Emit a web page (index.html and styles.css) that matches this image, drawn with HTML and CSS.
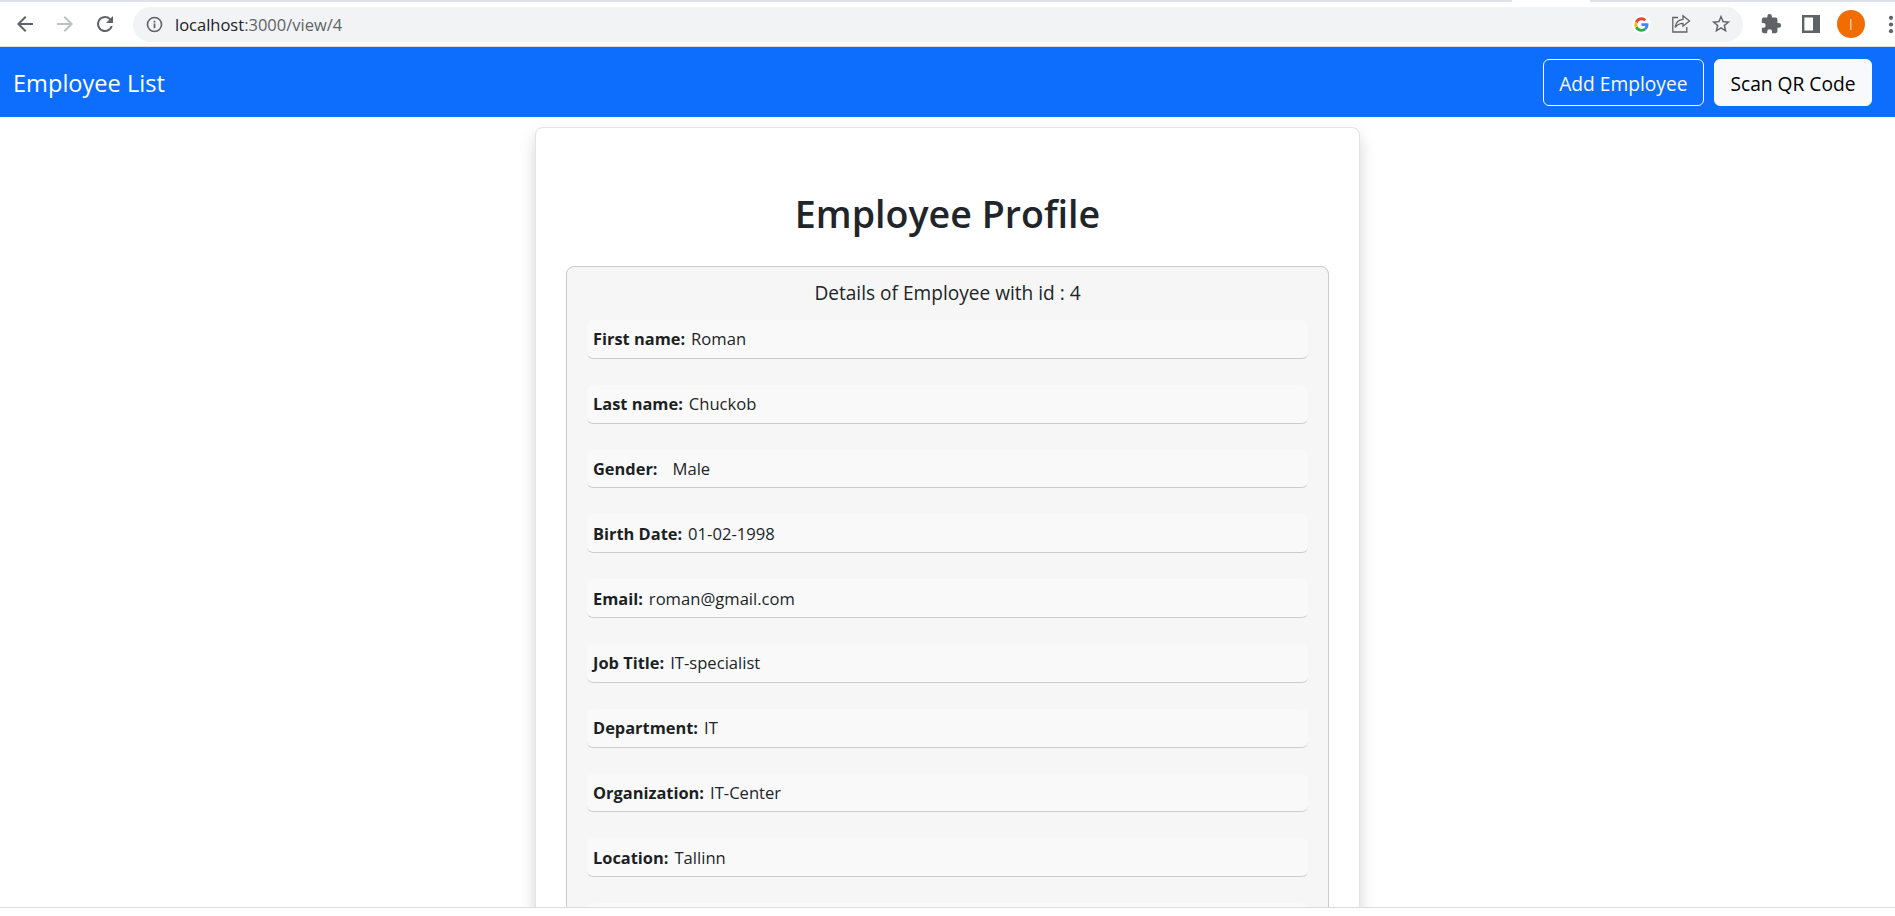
FILE: index.html
```html
<!DOCTYPE html>
<html lang="en">
<head>
<meta charset="utf-8">
<title>Employee Profile</title>
<link rel="stylesheet" href="styles.css">
</head>
<body>
<div class="window">
  <div class="tabstrip"><div class="tab-gap"></div></div>
  <div class="toolbar">
    <svg class="tb-icon back" viewBox="0 0 24 24"><path d="M20 11H7.830l5.590-5.590L12 4l-8 8 8 8 1.410-1.410L7.830 13H20z"/></svg>
    <svg class="tb-icon fwd" viewBox="0 0 24 24"><path d="M4 11h12.170l-5.590-5.590L12 4l8 8-8 8-1.410-1.410L16.170 13H4z"/></svg>
    <svg class="tb-icon reload" viewBox="0 0 24 24"><path d="M17.650 6.350A7.960 7.960 0 0 0 12 4a8 8 0 1 0 7.730 10h-2.080A6 6 0 1 1 12 6c1.660 0 3.140.690 4.220 1.780L13 11h7V4z"/></svg>
    <div class="omnibox">
      <svg class="info" viewBox="0 0 16 16"><circle cx="8" cy="8" r="6.600" fill="none" stroke="#5f6368" stroke-width="1.500"/><rect x="7.200" y="7" width="1.600" height="4.400" fill="#5f6368"/><rect x="7.200" y="4.500" width="1.600" height="1.600" fill="#5f6368"/></svg>
      <span class="url"><span class="host">localhost</span>:3000/view/4</span>
      <span class="omni-spacer"></span>
      <svg class="omni-g" viewBox="0 0 18 18">
        <circle cx="9" cy="9" r="9" fill="#fff"/>
        <path fill="#4285f4" d="M15.600 9.200c0-.5 0-.9-.1-1.300H9v2.500h3.700a3.200 3.200 0 0 1-1.400 2.100l2.100 1.600c1.300-1.200 2.200-2.900 2.200-4.900z"/>
        <path fill="#34a853" d="M9 15.800c1.800 0 3.300-.6 4.400-1.600l-2.100-1.600c-.6.4-1.400.7-2.300.7-1.800 0-3.300-1.200-3.800-2.800l-2.200 1.700A6.800 6.800 0 0 0 9 15.800z"/>
        <path fill="#fbbc05" d="M5.200 10.500a4.100 4.100 0 0 1 0-2.800L3 6a6.800 6.800 0 0 0 0 6.200z"/>
        <path fill="#ea4335" d="M9 4.900c1 0 1.900.3 2.600 1l1.900-1.900A6.600 6.600 0 0 0 9 2.200 6.800 6.800 0 0 0 3 6l2.200 1.700C5.700 6.100 7.200 4.900 9 4.900z"/>
      </svg>
      <svg class="omni-icon" viewBox="0 0 20 20"><path fill="none" stroke="#5f6368" stroke-width="1.300" d="M7 3.500H1.800v14.500h14v-5M12 1.800l6.500 5.200-6.500 5.200V9.300c-3.700 0-6 1.300-7.800 4.200.4-4.700 3.200-7.700 7.800-8.200z"/></svg>
      <svg class="omni-icon star" viewBox="0 0 24 24"><path d="M22 9.240l-7.190-.62L12 2 9.190 8.630 2 9.240l5.460 4.730L5.820 21 12 17.270 18.180 21l-1.630-7.030L22 9.240zM12 15.400l-3.760 2.270 1-4.280-3.320-2.880 4.380-.38L12 6.100l1.710 4.040 4.380.38-3.320 2.880 1 4.280L12 15.400z"/></svg>
    </div>
    <svg class="tb-icon puzzle" viewBox="0 0 24 24"><path d="M20.500 11H19V7a2 2 0 0 0-2-2h-4V3.500a2.500 2.500 0 0 0-5 0V5H4a2 2 0 0 0-2 2v3.800h1.500a2.700 2.700 0 0 1 0 5.400H2V20a2 2 0 0 0 2 2h3.800v-1.500a2.700 2.700 0 0 1 5.400 0V22H17a2 2 0 0 0 2-2v-4h1.500a2.500 2.500 0 0 0 0-5z"/></svg>
    <svg class="tb-icon panel" viewBox="0 0 18 18"><path fill-rule="evenodd" d="M0 0h18v18H0zM2.400 2.400v13.200h8.600V2.400z"/></svg>
    <span class="avatar">I</span>
    <svg class="tb-icon dots" viewBox="0 0 6 20"><circle cx="3" cy="3" r="2.200"/><circle cx="3" cy="10" r="2.200"/><circle cx="3" cy="17" r="2.200"/></svg>
  </div>
  <nav class="navbar">
    <a class="brand">Employee List</a>
    <div class="nav-actions">
      <button class="btn btn-outline">Add Employee</button>
      <button class="btn btn-light">Scan QR Code</button>
    </div>
  </nav>
  <main class="page">
    <section class="profile-card">
      <h1 class="title">Employee Profile</h1>
      <div class="details">
        <div class="details-head">Details of Employee with id : 4</div>
        <div class="row"><b>First name:</b> <span>Roman</span></div>
        <div class="row"><b>Last name:</b> <span>Chuckob</span></div>
        <div class="row"><b>Gender:</b> <span class="gap">Male</span></div>
        <div class="row"><b>Birth Date:</b> <span>01-02-1998</span></div>
        <div class="row"><b>Email:</b> <span>roman@gmail.com</span></div>
        <div class="row"><b>Job Title:</b> <span>IT-specialist</span></div>
        <div class="row"><b>Department:</b> <span>IT</span></div>
        <div class="row"><b>Organization:</b> <span>IT-Center</span></div>
        <div class="row"><b>Location:</b> <span>Tallinn</span></div>
        <div class="row"></div>
      </div>
    </section>
  </main>
  <div class="bottom-edge"></div>
</div>
</body>
</html>
```
FILE: styles.css
```css
* { box-sizing: border-box; }
html, body { margin: 0; padding: 0; height: 100%; overflow: hidden; background: #fff; }
body { font-family: "Open Sans", "Noto Sans", sans-serif; color: #212529; }
.window { height: 916px; display: flex; flex-direction: column; }
.tabstrip { height: 2px; background: #dee1e6; flex: none; }
.tab-gap { width: 78px; height: 2px; margin-left: 1512px; background: #fff; }
.toolbar { height: 45px; flex: none; background: #fff; border-bottom: 1px solid #dadce0; display: flex; align-items: center; padding-left: 13px; }
.tb-icon { width: 24px; height: 24px; fill: #5f6368; flex: none; }
.fwd { fill: #bdc1c6; margin-left: 16px; }
.reload { margin-left: 16px; }
.omnibox { width: 1610px; height: 35px; margin-left: 16px; background: #f1f3f4; border-radius: 18px; display: flex; align-items: center; padding-left: 13px; padding-right: 11px; flex: none; }
.info { width: 17px; height: 17px; flex: none; }
.url { margin-left: 12px; font-size: 16.5px; color: #5f6368; white-space: nowrap; }
.host { color: #202124; }
.omni-spacer { flex: 1; }
.omni-g { width: 19px; height: 19px; flex: none; }
.omni-icon { width: 20px; height: 20px; flex: none; margin-left: 20px; }
.star { width: 22px; height: 22px; fill: #5f6368; margin-left: 19px; }
.puzzle { margin-left: 17px; width: 22px; height: 22px; }
.panel { margin-left: 20px; width: 18px; height: 18px; }
.avatar { margin-left: 17px; width: 28px; height: 28px; border-radius: 50%; background: #f16d01; color: #fff; font-size: 15px; font-weight: 300; display: flex; align-items: center; justify-content: center; flex: none; }
.dots { width: 6px; height: 19px; margin-left: 23px; }
.navbar { height: 70px; flex: none; background: #0d6efd; display: flex; align-items: center; justify-content: space-between; padding: 0 23px 0 13px; }
.brand { color: #fff; font-size: 23.6px; padding-top: 2px; }
.nav-actions { display: flex; gap: 10px; }
.btn { height: 47px; border-radius: 6px; font: inherit; font-size: 19.2px; padding: 2px 15.5px 0; border: 1px solid #f8f9fa; white-space: nowrap; }
.btn-outline { background: transparent; color: #f8f9fa; }
.btn-light { background: #f8f9fa; color: #000; }
.page { flex: 1; min-height: 0; overflow: hidden; display: flex; justify-content: center; align-items: flex-start; padding-top: 10px; }
.profile-card { width: 825px; padding: 62px 30px 0; background: #fff; border: 1px solid #e3e3e3; border-radius: 8px; box-shadow: 0 8px 16px rgba(0,0,0,.17); flex: none; }
.title { margin: 0; font-size: 37.6px; font-weight: 600; line-height: 48px; text-align: center; }
.details { margin-top: 28px; padding: 0 20px 20px; background: #f6f6f6; border: 1px solid #ccc; border-radius: 8px; }
.details-head { text-align: center; font-size: 19.1px; line-height: 29px; padding: 12px 0; }
.row { height: 38.8px; margin-bottom: 26px; padding: 0 6px; background: #f9f9f9; border-bottom: 1px solid #ccc; border-radius: 6px; font-size: 16.6px; display: flex; align-items: center; gap: 6px; }
.row b { font-size: 16.4px; font-weight: 700; color: #1c1f23; }
.gap { margin-left: 9px; }
.bottom-edge { height: 9px; flex: none; background: #fff; border-top: 1px solid #dadce0; position: relative; }
```
